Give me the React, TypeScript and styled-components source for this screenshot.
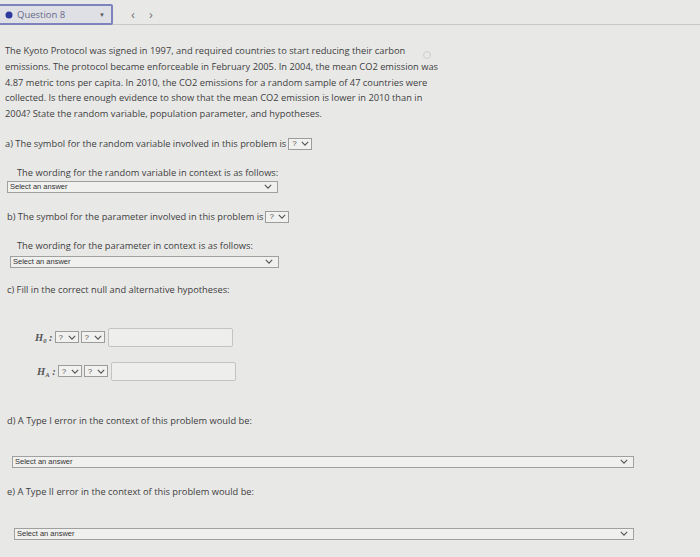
import React from "react"
import styled, { createGlobalStyle } from "styled-components"

const GlobalStyle = createGlobalStyle`
  html, body {
    margin: 0;
    padding: 0;
    background: #e8e8e7;
  }
  body {
    font-family: "Open Sans", "Liberation Sans", sans-serif;
    color: #3e3e3e;
  }
`

const Chevron = ({ size = 8 }: { size?: number }) => (
  <svg width={size} height={size * 0.65} viewBox="0 0 10 6.5">
    <path d="M1 1 L5 5.2 L9 1" fill="none" stroke="#555" strokeWidth="1.4" />
  </svg>
)

const Dot = ({ faint }: { faint?: boolean }) => (
  <svg width="8" height="8" viewBox="0 0 8 8">
    <circle cx="4" cy="4" r="3.5" fill={faint ? "none" : "#2d3a9e"} stroke={faint ? "#cfcfcf" : "none"} />
  </svg>
)

export default function App() {
  return (
    <>
      <GlobalStyle />
      <Page>
        <TopBar>
          <QuestionSelect>
            <Dot />
            <QuestionLabel>Question 8</QuestionLabel>
            <Caret>▼</Caret>
          </QuestionSelect>
          <NavArrow>‹</NavArrow>
          <NavArrow>›</NavArrow>
        </TopBar>

        <Content>
          <Paragraph>
            The Kyoto Protocol was signed in 1997, and required countries to start reducing their carbon
            <CheckMark>
              <Dot faint />
            </CheckMark>
            <br />
            emissions. The protocol became enforceable in February 2005. In 2004, the mean CO2 emission was
            <br />
            4.87 metric tons per capita. In 2010, the CO2 emissions for a random sample of 47 countries were
            <br />
            collected. Is there enough evidence to show that the mean CO2 emission is lower in 2010 than in
            <br />
            2004? State the random variable, population parameter, and hypotheses.
          </Paragraph>

          <Line $top={14} $indent={0}>
            a) The symbol for the random variable involved in this problem is
            <MiniSelect>
              ? <Chevron />
            </MiniSelect>
          </Line>

          <Line $top={13} $indent={12}>
            The wording for the random variable in context is as follows:
          </Line>
          <AnswerSelect $top={0} $left={2} $width={271}>
            <span>Select an answer</span>
            <Chevron />
          </AnswerSelect>

          <Line $top={16} $indent={2}>
            b) The symbol for the parameter involved in this problem is
            <MiniSelect>
              ? <Chevron />
            </MiniSelect>
          </Line>

          <Line $top={13} $indent={12}>
            The wording for the parameter in context is as follows:
          </Line>
          <AnswerSelect $top={2} $left={5} $width={269}>
            <span>Select an answer</span>
            <Chevron />
          </AnswerSelect>

          <Line $top={14} $indent={2}>
            c) Fill in the correct null and alternative hypotheses:
          </Line>

          <HypRow $top={30} $indent={30}>
            <HypLabel>
              H<sub>0</sub> :
            </HypLabel>
            <MiniSelect>
              ? <Chevron />
            </MiniSelect>
            <MiniSelect>
              ? <Chevron />
            </MiniSelect>
            <TextBox />
          </HypRow>

          <HypRow $top={15} $indent={32}>
            <HypLabel>
              H<sub>A</sub> :
            </HypLabel>
            <MiniSelect>
              ? <Chevron />
            </MiniSelect>
            <MiniSelect>
              ? <Chevron />
            </MiniSelect>
            <TextBox />
          </HypRow>

          <Line $top={32} $indent={2}>
            d) A Type I error in the context of this problem would be:
          </Line>
          <AnswerSelect $top={27} $left={7} $width={622}>
            <span>Select an answer</span>
            <Chevron />
          </AnswerSelect>

          <Line $top={16} $indent={2}>
            e) A Type II error in the context of this problem would be:
          </Line>
          <AnswerSelect $top={28} $left={9} $width={620}>
            <span>Select an answer</span>
            <Chevron />
          </AnswerSelect>
        </Content>
      </Page>
    </>
  )
}

const Page = styled.div`
  width: 700px;
  height: 557px;
  overflow: hidden;
`

const TopBar = styled.div`
  height: 25px;
  border-bottom: 1px solid #c9c9c9;
  display: flex;
  align-items: flex-end;
  box-sizing: border-box;
`

const QuestionSelect = styled.div`
  width: 117px;
  height: 21px;
  box-sizing: border-box;
  margin-left: -4px;
  margin-bottom: -1px;
  padding: 0 6px 0 7px;
  border: 2px solid #7c83bd;
  border-radius: 2px;
  background: #dfe0e6;
  display: flex;
  align-items: center;
  gap: 4px;
`

const QuestionLabel = styled.span`
  flex: 1;
  font-size: 9.5px;
  color: #666a86;
`

const Caret = styled.span`
  font-size: 6px;
  color: #555;
`

const NavArrow = styled.span`
  font-size: 13px;
  color: #777;
  margin-left: 14px;
  align-self: center;
  margin-top: 4px;
  &:first-of-type {
    margin-left: 18px;
  }
`

const Content = styled.div`
  padding: 18px 0 0 5px;
  font-size: 9.3px;
`

const Paragraph = styled.div`
  line-height: 15.8px;
  position: relative;
`

const CheckMark = styled.span`
  position: absolute;
  left: 418px;
  top: 5px;
`

const Line = styled.div<{ $top: number; $indent: number }>`
  margin-top: ${(p) => p.$top}px;
  padding-left: ${(p) => p.$indent}px;
  line-height: 16px;
  height: 16px;
  display: flex;
  align-items: center;
  white-space: nowrap;
`

const MiniSelect = styled.span`
  display: inline-flex;
  align-items: center;
  justify-content: space-between;
  gap: 3px;
  box-sizing: border-box;
  width: 24px;
  height: 12px;
  margin-left: 2px;
  padding: 0 2px 0 3px;
  border: 1px solid #9c9c9c;
  background: #f1f1f0;
  font-family: "Liberation Sans", sans-serif;
  font-size: 8px;
  color: #555;
`

const AnswerSelect = styled.div<{ $top: number; $left: number; $width: number }>`
  margin-top: ${(p) => p.$top}px;
  margin-left: ${(p) => p.$left}px;
  width: ${(p) => p.$width}px;
  height: 12px;
  box-sizing: border-box;
  border: 1px solid #a0a0a0;
  background: #f0f0ef;
  display: flex;
  align-items: center;
  justify-content: space-between;
  padding: 0 5px 0 2px;
  font-family: "Liberation Sans", sans-serif;
  font-size: 7.5px;
  color: #333;
`

const HypRow = styled.div<{ $top: number; $indent: number }>`
  margin-top: ${(p) => p.$top}px;
  padding-left: ${(p) => p.$indent}px;
  height: 19px;
  display: flex;
  align-items: center;
`

const HypLabel = styled.span`
  font-family: "Liberation Serif", serif;
  font-style: italic;
  font-weight: bold;
  font-size: 10.5px;
  color: #555;
  white-space: nowrap;
  sub {
    font-size: 6.5px;
    vertical-align: -2px;
    line-height: 0;
  }
`

const TextBox = styled.span`
  width: 125px;
  height: 19px;
  box-sizing: border-box;
  border: 1px solid #c3c3c3;
  border-radius: 2px;
  background: #eeeeed;
  margin-left: 3px;
`
